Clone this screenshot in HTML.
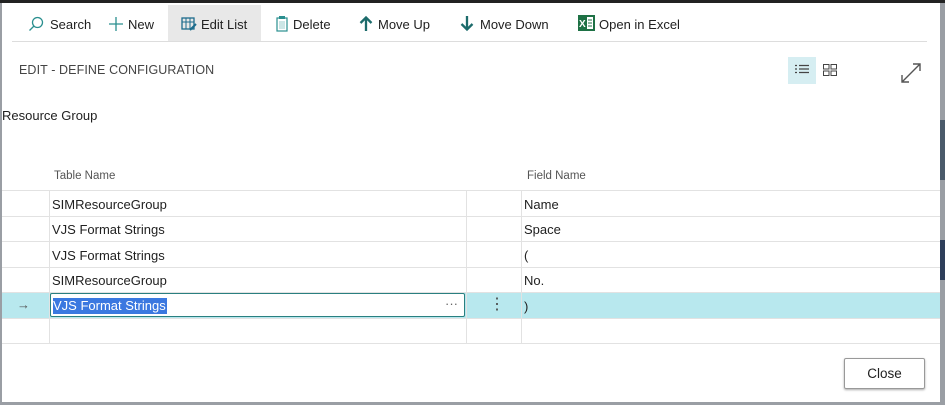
<!DOCTYPE html><html><head><style>
body{margin:0;width:945px;height:405px;background:#9a9ea4;position:relative;overflow:hidden;font-family:"Liberation Sans",sans-serif;font-size:13px;color:#212121}
.top{position:absolute;left:0;top:0;width:945px;height:3px;background:#222}
.dlg{position:absolute;left:2px;top:3px;width:938px;height:399px;background:#fff}
.sep{position:absolute;left:10px;top:38px;width:915px;height:1px;background:#ddd}
.t{position:absolute;white-space:nowrap}
.hl{position:absolute;left:0;width:938px;height:1px;background:#e2e2e2}
.vl{position:absolute;width:1px;background:#e2e2e2;top:188px;height:153px}
</style></head><body>
<div class="top"></div>
<div style="position:absolute;left:940px;top:120px;width:5px;height:60px;background:#4a5a6a"></div>
<div style="position:absolute;left:940px;top:240px;width:5px;height:40px;background:#2e3e5a"></div>
<div class="dlg">
<div style="position:absolute;left:166px;top:2px;width:93px;height:36px;background:#e8e8e8"></div>
<svg class="t" style="left:26px;top:13px" width="16" height="16" viewBox="0 0 16 16"><circle cx="9.5" cy="6.5" r="5" fill="none" stroke="#2a8f8f" stroke-width="1.3"/><path d="M6 10L1.5 14.5" stroke="#2a8f8f" stroke-width="1.3"/></svg>
<div class="t" style="left:48px;top:14px">Search</div>
<svg class="t" style="left:106px;top:13px" width="16" height="16"><path d="M8 1V15M1 8H15" stroke="#2a8f8f" stroke-width="1.3"/></svg>
<div class="t" style="left:126px;top:14px">New</div>
<svg class="t" style="left:179px;top:13px" width="16" height="16"><rect x="1" y="2" width="12" height="11" fill="none" stroke="#1c6b8c" stroke-width="1.3"/><path d="M1 6H13M5 2V13M9 2V13" stroke="#1c6b8c"/><path d="M9 14L15 8" stroke="#1c6b8c" stroke-width="2"/></svg>
<div class="t" style="left:199px;top:14px">Edit List</div>
<svg class="t" style="left:273px;top:12px" width="14" height="17"><rect x="2" y="3" width="10" height="13" fill="none" stroke="#2a8f8f" stroke-width="1.2"/><rect x="4" y="1" width="6" height="3" fill="#2a8f8f"/><path d="M5 6V14M7 6V14M9 6V14" stroke="#9cc"/></svg>
<div class="t" style="left:291px;top:14px">Delete</div>
<svg class="t" style="left:357px;top:12px" width="14" height="17"><path d="M7 16V3M1.5 8L7 2.5L12.5 8" stroke="#1c6b6b" stroke-width="2.3" fill="none"/></svg>
<div class="t" style="left:376px;top:14px">Move Up</div>
<svg class="t" style="left:458px;top:12px" width="14" height="17"><path d="M7 1V14M1.5 9L7 14.5L12.5 9" stroke="#1c6b6b" stroke-width="2.3" fill="none"/></svg>
<div class="t" style="left:478px;top:14px">Move Down</div>
<svg class="t" style="left:576px;top:12px" width="17" height="16"><rect x="0" y="0" width="17" height="16" fill="#1e7145"/><rect x="9" y="2" width="6" height="12" fill="#fff"/><path d="M10 5H14M10 8H14M10 11H14" stroke="#1e7145"/><text x="1" y="12" font-size="10" font-weight="bold" fill="#fff" font-family="Liberation Sans">X</text></svg>
<div class="t" style="left:597px;top:14px">Open in Excel</div>
<div class="sep"></div>
<div class="t" style="left:17px;top:60px;font-size:12.5px;color:#444;letter-spacing:0.1px">EDIT - DEFINE CONFIGURATION</div>
<div style="position:absolute;left:786px;top:54px;width:28px;height:27px;background:#d6eef2"></div>
<svg class="t" style="left:793px;top:61px" width="14" height="12"><path d="M0 1.5H2M4 1.5H14M0 5H2M4 5H14M0 8.5H2M4 8.5H14" stroke="#444" stroke-width="1.3"/></svg>
<svg class="t" style="left:821px;top:61px" width="14" height="12"><rect x="0.5" y="0.5" width="5.5" height="4.5" fill="none" stroke="#444"/><rect x="8" y="0.5" width="5.5" height="4.5" fill="none" stroke="#444"/><rect x="0.5" y="7" width="5.5" height="4.5" fill="none" stroke="#444"/><rect x="8" y="7" width="5.5" height="4.5" fill="none" stroke="#444"/></svg>
<svg class="t" style="left:898px;top:59px" width="22" height="22"><path d="M2 20L20 2M2 13V20H9M13 2H20V9" stroke="#555" stroke-width="1.4" fill="none"/></svg>
<div class="t" style="left:0;top:105px;font-size:13px">Resource Group</div>
<div class="t" style="left:52px;top:167px;font-size:11.5px;color:#555">Table Name</div>
<div class="t" style="left:525px;top:167px;font-size:11.5px;color:#555">Field Name</div>
<div style="position:absolute;left:0;top:290px;width:938px;height:25px;background:#b8e8ee"></div>
<div class="hl" style="top:187px"></div><div class="hl" style="top:213px"></div><div class="hl" style="top:238px"></div><div class="hl" style="top:264px"></div><div class="hl" style="top:289px"></div><div class="hl" style="top:315px"></div><div class="hl" style="top:340px"></div>
<div class="vl" style="left:47px"></div><div class="vl" style="left:464px"></div><div class="vl" style="left:519px"></div>
<div class="t" style="left:50px;top:194px">SIMResourceGroup</div><div class="t" style="left:522px;top:194px">Name</div>
<div class="t" style="left:50px;top:219px">VJS Format Strings</div><div class="t" style="left:522px;top:219px">Space</div>
<div class="t" style="left:50px;top:245px">VJS Format Strings</div><div class="t" style="left:522px;top:245px">(</div>
<div class="t" style="left:50px;top:270px">SIMResourceGroup</div><div class="t" style="left:522px;top:270px">No.</div>
<div style="position:absolute;left:48px;top:290px;width:413px;height:22px;background:#fff;border:1.5px solid #2a7f80;border-radius:2px"></div>
<div class="t" style="left:51px;top:295px;background:#3b78e0;color:#fff;height:16px;line-height:16px;padding-right:1px">VJS Format Strings</div>
<div class="t" style="left:443px;top:293px;color:#666">···</div>
<div class="t" style="left:487px;top:293px;font-size:16px;color:#444;line-height:18px">⋮</div>
<div class="t" style="left:15px;top:294px;color:#555">→</div>
<div class="t" style="left:522px;top:296px">)</div>
<div style="position:absolute;left:842px;top:355px;width:79px;height:29px;border:1px solid #999;border-radius:2px;box-shadow:0 1px 2px #aaa;text-align:center;line-height:29px;font-size:13.5px">Close</div>
</div>
</body></html>
